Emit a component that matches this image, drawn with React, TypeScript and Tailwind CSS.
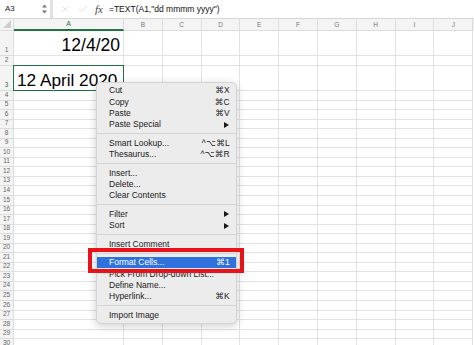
import { X, Check } from 'lucide-react';

const COLS = ['B', 'C', 'D', 'E', 'F', 'G', 'H', 'I', 'J'];

type Item = { label: string; key?: string; sub?: boolean; active?: boolean };

const GROUPS: Item[][] = [
  [
    { label: 'Cut', key: '⌘X' },
    { label: 'Copy', key: '⌘C' },
    { label: 'Paste', key: '⌘V' },
    { label: 'Paste Special', sub: true },
  ],
  [
    { label: 'Smart Lookup...', key: '^⌥⌘L' },
    { label: 'Thesaurus...', key: '^⌥⌘R' },
  ],
  [{ label: 'Insert...' }, { label: 'Delete...' }, { label: 'Clear Contents' }],
  [
    { label: 'Filter', sub: true },
    { label: 'Sort', sub: true },
  ],
  [{ label: 'Insert Comment' }],
  [
    { label: 'Format Cells...', key: '⌘1', active: true },
    { label: 'Pick From Drop-down List...' },
    { label: 'Define Name...' },
    { label: 'Hyperlink...', key: '⌘K' },
  ],
  [{ label: 'Import Image' }],
];

function Row({
  num,
  h,
  a,
  selected,
}: {
  num: number;
  h: string;
  a?: React.ReactNode;
  selected?: boolean;
}) {
  return (
    <div className={`flex ${h}`}>
      <div
        className={`w-[14px] shrink-0 flex items-end justify-center pb-[1px] text-[6.5px] leading-[8px] bg-[#f4f4f4] border-r border-b border-[#dcdcdc] ${
          selected ? 'text-[#217346]' : 'text-[#666]'
        }`}
      >
        {num}
      </div>
      <div className="relative w-[110px] shrink-0 border-r border-b border-[#e2e2e2]">
        {a}
        {selected && <div className="absolute -left-[1.5px] -top-[1px] -right-[0.5px] -bottom-[0.5px] border-[1.5px] border-[#1e7145]" />}
      </div>
      {COLS.map((c) => (
        <div key={c} className="w-[38.8px] shrink-0 border-r border-b border-[#e2e2e2]" />
      ))}
    </div>
  );
}

function Menu() {
  return (
    <div className="absolute left-[96px] top-[82px] w-[141px] rounded-[5px] bg-[#ececec] border border-[#d4d4d4] shadow-[0_2px_8px_rgba(0,0,0,0.2)] py-[2px] text-[8.5px] text-[#1a1a1a]">
      {GROUPS.map((g, gi) => (
        <div key={gi}>
          {gi > 0 && (
            <div className="h-[7.3px] flex items-center">
              <div className="w-full h-px bg-[#d4d4d4]" />
            </div>
          )}
          {g.map((it) => (
            <div
              key={it.label}
              className={`h-[11.3px] flex items-center justify-between pl-[12px] pr-[6px] ${
                it.active ? 'bg-[#2f72de] text-white' : ''
              }`}
            >
              <span>{it.label}</span>
              {it.key && <span className="tracking-[0.3px]">{it.key}</span>}
              {it.sub && (
                <svg width="5" height="6" viewBox="0 0 5 6" className="mr-[1px]">
                  <path d="M0 0 L5 3 L0 6 Z" fill="#1a1a1a" />
                </svg>
              )}
            </div>
          ))}
        </div>
      ))}
    </div>
  );
}

export default function App() {
  const rest = Array.from({ length: 27 }, (_, i) => i + 4);
  return (
    <div className="relative w-[474px] h-[345px] overflow-hidden bg-white font-['Liberation_Sans','DejaVu_Sans',sans-serif]">
      {/* formula bar */}
      <div className="flex h-[19px] border-b border-[#d6d6d6] bg-white">
        <div className="w-[50px] flex items-center justify-between pl-[5px] pr-[3px] text-[8px] text-[#222]">
          <span>A3</span>
          <svg width="5" height="10" viewBox="0 0 5 10">
            <path d="M2.5 0.5 L5 3.5 L0 3.5 Z" fill="#777" />
            <path d="M2.5 9.5 L5 6.5 L0 6.5 Z" fill="#777" />
          </svg>
        </div>
        <div className="w-[3px] bg-[#e6e6e6] border-x border-[#dcdcdc]" />
        <div className="flex items-center pl-[7px] pr-[6px]">
          <X size={10} strokeWidth={1.3} color="#c4c4c4" />
          <Check size={10} strokeWidth={1.3} color="#c4c4c4" className="ml-[8px]" />
          <span className="ml-[7px] font-['Liberation_Serif',serif] italic text-[11px] text-[#444] leading-none">fx</span>
        </div>
        <div className="flex-1 flex items-center text-[8.5px] text-[#111]">=TEXT(A1,"dd mmmm yyyy")</div>
      </div>

      {/* column headers */}
      <div className="flex h-[12px] bg-[#f4f4f4]">
        <div className="relative w-[14px] border-r border-b border-[#dcdcdc]">
          <svg width="8" height="8" viewBox="0 0 8 8" className="absolute right-[2px] bottom-[2px]">
            <path d="M8 0 L8 8 L0 8 Z" fill="#cfcfcf" />
          </svg>
        </div>
        <div className="w-[110px] flex items-center justify-center text-[7px] text-[#217346] border-r border-[#dcdcdc] border-b-2 border-b-[#217346]">
          A
        </div>
        {COLS.map((c) => (
          <div
            key={c}
            className="w-[38.8px] flex items-center justify-center text-[6.5px] text-[#777] border-r border-b border-[#dcdcdc]"
          >
            {c}
          </div>
        ))}
      </div>

      <Row
        num={1}
        h="h-[25px]"
        a={
          <div className="h-full flex items-end justify-end pr-[3px] text-[17.5px] leading-[20px] text-black">12/4/20</div>
        }
      />
      <Row num={2} h="h-[9.5px]" />
      <Row
        num={3}
        h="h-[25.5px]"
        selected
        a={
          <div className="h-full flex items-end pl-[3px] text-[17.2px] leading-[20px] text-black whitespace-nowrap">
            12 April 2020
          </div>
        }
      />
      {rest.map((n) => (
        <Row key={n} num={n} h="h-[9.55px]" />
      ))}

      <Menu />

      {/* highlight box */}
      <div className="absolute left-[88px] top-[248px] w-[156px] h-[25px] border-[4px] border-[#e8121a]" />
    </div>
  );
}
